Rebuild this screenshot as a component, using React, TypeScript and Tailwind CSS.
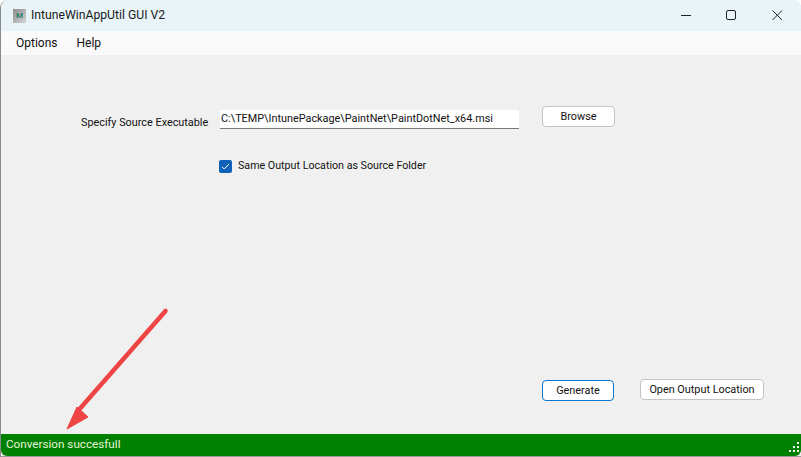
import React from "react";

const font = "font-['Roboto','Open_Sans',sans-serif]";

const App: React.FC = () => {
  return (
    <div className={`relative flex h-[457px] w-[801px] flex-col overflow-hidden rounded-t-lg border-l border-[#8a8a8a] bg-[#f0f0f0] text-[#111] ${font}`}>
      {/* title bar */}
      <div className="flex h-[31px] shrink-0 items-center bg-[#e8f4f7] pl-[12px]">
        <div className="flex h-[14px] w-[13px] items-center justify-center bg-gradient-to-br from-[#8d8d8d] to-[#d6d6d6] text-[8px] font-bold text-[#2f7f6d]">
          M
        </div>
        <span className="ml-[5px] text-[12.2px] text-[#1a1a1a]">IntuneWinAppUtil GUI V2</span>
        <div className="ml-auto flex h-full items-center">
          <svg width="46" height="31" viewBox="0 0 46 31">
            <path d="M12 15.5h10" stroke="#222" strokeWidth="1" fill="none" />
          </svg>
          <svg width="46" height="31" viewBox="0 0 46 31">
            <rect x="11.5" y="10.5" width="9" height="9" rx="1.5" stroke="#222" strokeWidth="1" fill="none" />
          </svg>
          <svg width="40" height="31" viewBox="0 0 40 31">
            <path d="M11.5 10.5l9.5 9.5M21 10.5l-9.5 9.5" stroke="#222" strokeWidth="1" fill="none" />
          </svg>
        </div>
      </div>

      {/* menu bar */}
      <div className="flex h-[24px] shrink-0 items-center gap-[19px] bg-[#fafafa] pl-[15px] text-[12px]">
        <span>Options</span>
        <span>Help</span>
      </div>

      {/* form */}
      <div className="flex min-h-0 flex-1 flex-col pl-[80px] text-[10.85px]">
        <div className="mt-[51px] flex items-start">
          <span className="mt-[9px] w-[139px] whitespace-nowrap leading-[16px]">Specify Source Executable</span>
          <div className="mt-[4px] flex h-[19px] w-[299px] items-center whitespace-nowrap border-b border-[#777] bg-white pl-[1px] pt-[1px]">
            C:\TEMP\IntunePackage\PaintNet\PaintDotNet_x64.msi
          </div>
          <button className="ml-[23px] h-[21px] w-[73px] rounded-[4px] border border-[#c4c4c4] bg-white pt-[2px] text-center">
            Browse
          </button>
        </div>

        <div className="ml-[138px] mt-[27px] flex h-[17px] items-center">
          <span className="flex h-[13px] w-[13px] items-center justify-center rounded-[2px] bg-[#0f62b8]">
            <svg width="9" height="9" viewBox="0 0 9 9">
              <path d="M1 4.8l2.2 2.2L8 2" stroke="#fff" strokeWidth="1" fill="none" />
            </svg>
          </span>
          <span className="ml-[6px] text-[10.7px]">Same Output Location as Source Folder</span>
        </div>

        <div className="mt-auto mb-[33px] flex items-start justify-end pr-[37px]">
          <button className="mt-[1px] h-[21px] w-[72px] rounded-[4px] border border-[#0b75cf] bg-white pt-[2px] text-center">
            Generate
          </button>
          <button className="ml-[26px] h-[21px] w-[124px] rounded-[4px] border border-[#c4c4c4] bg-white pt-[1px] text-center">
            Open Output Location
          </button>
        </div>
      </div>

      {/* status bar */}
      <div className="flex h-[22px] shrink-0 items-center rounded-b-md bg-[#008000] pl-[5px] text-[11.7px] text-[#e8f5d8]">
        Conversion succesfull
        <svg width="12" height="12" viewBox="0 0 12 12" className="ml-auto mr-[1px] mt-[6px]">
          <g fill="#f2f2f2">
            <rect x="9" y="0" width="2" height="2" />
            <rect x="5" y="4" width="2" height="2" />
            <rect x="9" y="4" width="2" height="2" />
            <rect x="1" y="8" width="2" height="2" />
            <rect x="5" y="8" width="2" height="2" />
            <rect x="9" y="8" width="2" height="2" />
          </g>
        </svg>
      </div>
      <div className="h-px shrink-0 bg-[#9a9a9a]" />

      {/* red annotation arrow */}
      <svg width="801" height="457" viewBox="0 0 801 457" className="pointer-events-none absolute -left-px top-0">
        <path d="M165.5 311L77 412" stroke="#ef4444" strokeWidth="4.5" strokeLinecap="round" fill="none" />
        <path d="M67 429L77 407L88 417Z" fill="#ef4444" stroke="#ef4444" strokeWidth="1" strokeLinejoin="round" />
      </svg>
    </div>
  );
};

export default App;
